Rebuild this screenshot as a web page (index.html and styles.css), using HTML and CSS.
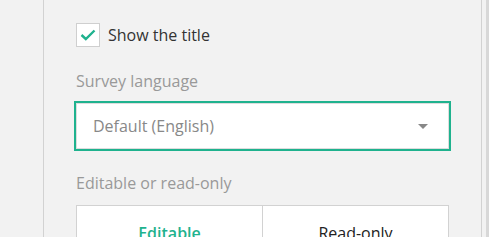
FILE: index.html
```html
<!DOCTYPE html>
<html lang="en">
<head>
  <meta charset="UTF-8">
  <meta name="viewport" content="width=device-width, initial-scale=1.0">
  <title>Survey settings</title>
  <link rel="stylesheet" href="styles.css">
</head>
<body>
  <div class="layout">
    <div class="rail"></div>
    <main class="panel">
      <label class="check-row">
        <span class="checkbox">
          <svg width="16" height="12" viewBox="0 0 16 12"><path d="M1.5 6 L5.8 10 L14.5 1.5" fill="none" stroke="#1fb28e" stroke-width="2.4"/></svg>
        </span>
        <span class="check-label">Show the title</span>
      </label>

      <div class="field">
        <div class="field-label">Survey language</div>
        <div class="select">
          <span>Default (English)</span>
          <span class="caret"></span>
        </div>
      </div>

      <div class="field">
        <div class="field-label">Editable or read-only</div>
        <div class="toggle">
          <button class="toggle-btn active">Editable</button>
          <button class="toggle-btn">Read-only</button>
        </div>
      </div>
    </main>
    <div class="scrollbar"></div>
  </div>
</body>
</html>
```

FILE: styles.css
```css
body {
  margin: 0;
  background-color: #f2f2f2;
  font-family: "Open Sans", "Noto Sans", sans-serif;
  color: #333;
}
.layout {
  display: flex;
  height: 237px;
  overflow: hidden;
}
.rail {
  width: 43px;
  border-right: 1px solid #d2d2d2;
  flex-shrink: 0;
}
.panel {
  flex: 1;
  padding: 23px 32px 0 32px;
  border-right: 1px solid #d2d2d2;
}
.scrollbar {
  width: 3px;
  margin-left: 4px;
  background-color: #d8d8d8;
}
.check-row {
  display: flex;
  align-items: center;
  gap: 8px;
}
.checkbox {
  width: 22px;
  height: 22px;
  border: 1px solid #cfcfcf;
  background: #fff;
  display: flex;
  align-items: center;
  justify-content: center;
}
.check-label {
  font-size: 16px;
  color: #333;
}
.field {
  margin-top: 24px;
}
.field-label {
  font-size: 16px;
  line-height: 20px;
  color: #999;
  margin-bottom: 12px;
}
.select {
  height: 44px;
  border: 1px solid #ddd;
  outline: 2px solid #1fb28e;
  background: #fff;
  display: flex;
  align-items: center;
  justify-content: space-between;
  padding: 0 20px 0 16px;
  font-size: 16px;
  color: #888;
}
.caret {
  width: 0;
  height: 0;
  border-left: 5px solid transparent;
  border-right: 5px solid transparent;
  border-top: 5px solid #888;
}
.toggle {
  display: flex;
  background: #fff;
  border: 1px solid #d2d2d2;
}
.toggle-btn {
  flex: 1;
  height: 46px;
  border: none;
  background: #fff;
  font-family: inherit;
  font-size: 16px;
  color: #222;
  padding: 8px 0 0 0;
}
.toggle-btn + .toggle-btn {
  border-left: 1px solid #d2d2d2;
}
.toggle-btn.active {
  color: #1fb28e;
  font-weight: 600;
}
```
